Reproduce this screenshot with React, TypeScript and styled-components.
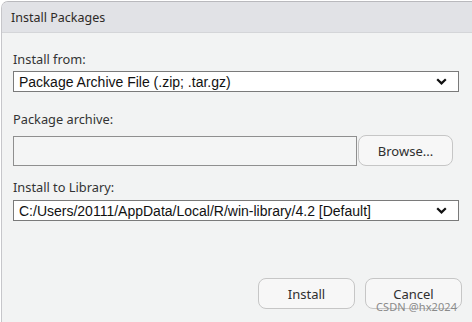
import React from "react";
import styled, { createGlobalStyle } from "styled-components";

const GlobalStyle = createGlobalStyle`
  *, *::before, *::after {
    box-sizing: border-box;
  }
  html, body {
    margin: 0;
    padding: 0;
    background: #ffffff;
  }
  body {
    font-family: "Noto Sans", "Open Sans", sans-serif;
  }
`

const Window = styled.div`
  position: relative;
  width: 471px;
  height: 321px;
  margin: 1px 0 0 1px;
  background-color: #f2f3f3;
  border-top: 1px solid #b9b9bd;
  border-left: 1px solid #c6c6ca;
  border-top-left-radius: 7px;
  overflow: hidden;
  display: flex;
  flex-direction: column;
`

const TitleBar = styled.div`
  height: 31px;
  background-color: #e1e2e6;
  border-bottom: 1px solid #d4d5d8;
  display: flex;
  align-items: center;
  padding-left: 9px;
  font-size: 12.5px;
  color: #2e2a26;
`

const Body = styled.div`
  display: flex;
  flex-direction: column;
  padding: 17px 13px 0 11px;
`

const Label = styled.div<{ $top: number }>`
  height: 18px;
  line-height: 18px;
  margin-top: ${p => p.$top}px;
  font-size: 12.8px;
  color: #333333;
`

const Select = styled.div<{ $top: number }>`
  height: 21px;
  margin-top: ${p => p.$top}px;
  background-color: #ffffff;
  border: 1px solid #7a7a7a;
  display: flex;
  align-items: center;
  justify-content: space-between;
  padding: 0 11px 0 5px;
  font-family: "Liberation Sans", Arial, sans-serif;
  font-size: 14px;
  color: #111111;
`

const Chevron = () => (
  <svg width="11" height="7" viewBox="0 0 11 7">
    <path d="M1.2 1.2 L5.5 5.4 L9.8 1.2" fill="none" stroke="#111" strokeWidth="2.2" />
  </svg>
)

const FileRow = styled.div`
  display: flex;
  align-items: flex-end;
  margin-top: 7px;
  gap: 1px;
`

const FileInput = styled.div`
  width: 344px;
  height: 30px;
  background-color: #f4f5f5;
  border: 1px solid #8f8f8f;
`

const Button = styled.div<{ $width: number }>`
  width: ${p => p.$width}px;
  height: 31px;
  border: 1px solid #c6c6c6;
  border-radius: 8px;
  background-color: #f7f7f7;
  display: flex;
  align-items: center;
  justify-content: center;
  font-size: 13px;
  color: #2f2f2f;
`

const Footer = styled.div`
  display: flex;
  justify-content: flex-end;
  gap: 10px;
  padding-right: 10px;
  margin-top: 57px;
`

const Watermark = styled.div`
  position: absolute;
  left: 374px;
  top: 297px;
  font-size: 11px;
  color: #8a8a8a;
  letter-spacing: 0.1px;
`

const App = () => {
  return (
    <>
      <GlobalStyle />
      <Window>
        <TitleBar>Install Packages</TitleBar>
        <Body>
          <Label $top={0}>Install from:</Label>
          <Select $top={3}>
            Package Archive File (.zip; .tar.gz)
            <Chevron />
          </Select>
          <Label $top={18}>Package archive:</Label>
          <FileRow>
            <FileInput />
            <Button $width={95}>Browse...</Button>
          </FileRow>
          <Label $top={12}>Install to Library:</Label>
          <Select $top={4}>
            C:/Users/20111/AppData/Local/R/win-library/4.2 [Default]
            <Chevron />
          </Select>
        </Body>
        <Footer>
          <Button $width={97}>Install</Button>
          <Button $width={97}>Cancel</Button>
        </Footer>
        <Watermark>CSDN @hx2024</Watermark>
      </Window>
    </>
  )
}

export default App;
